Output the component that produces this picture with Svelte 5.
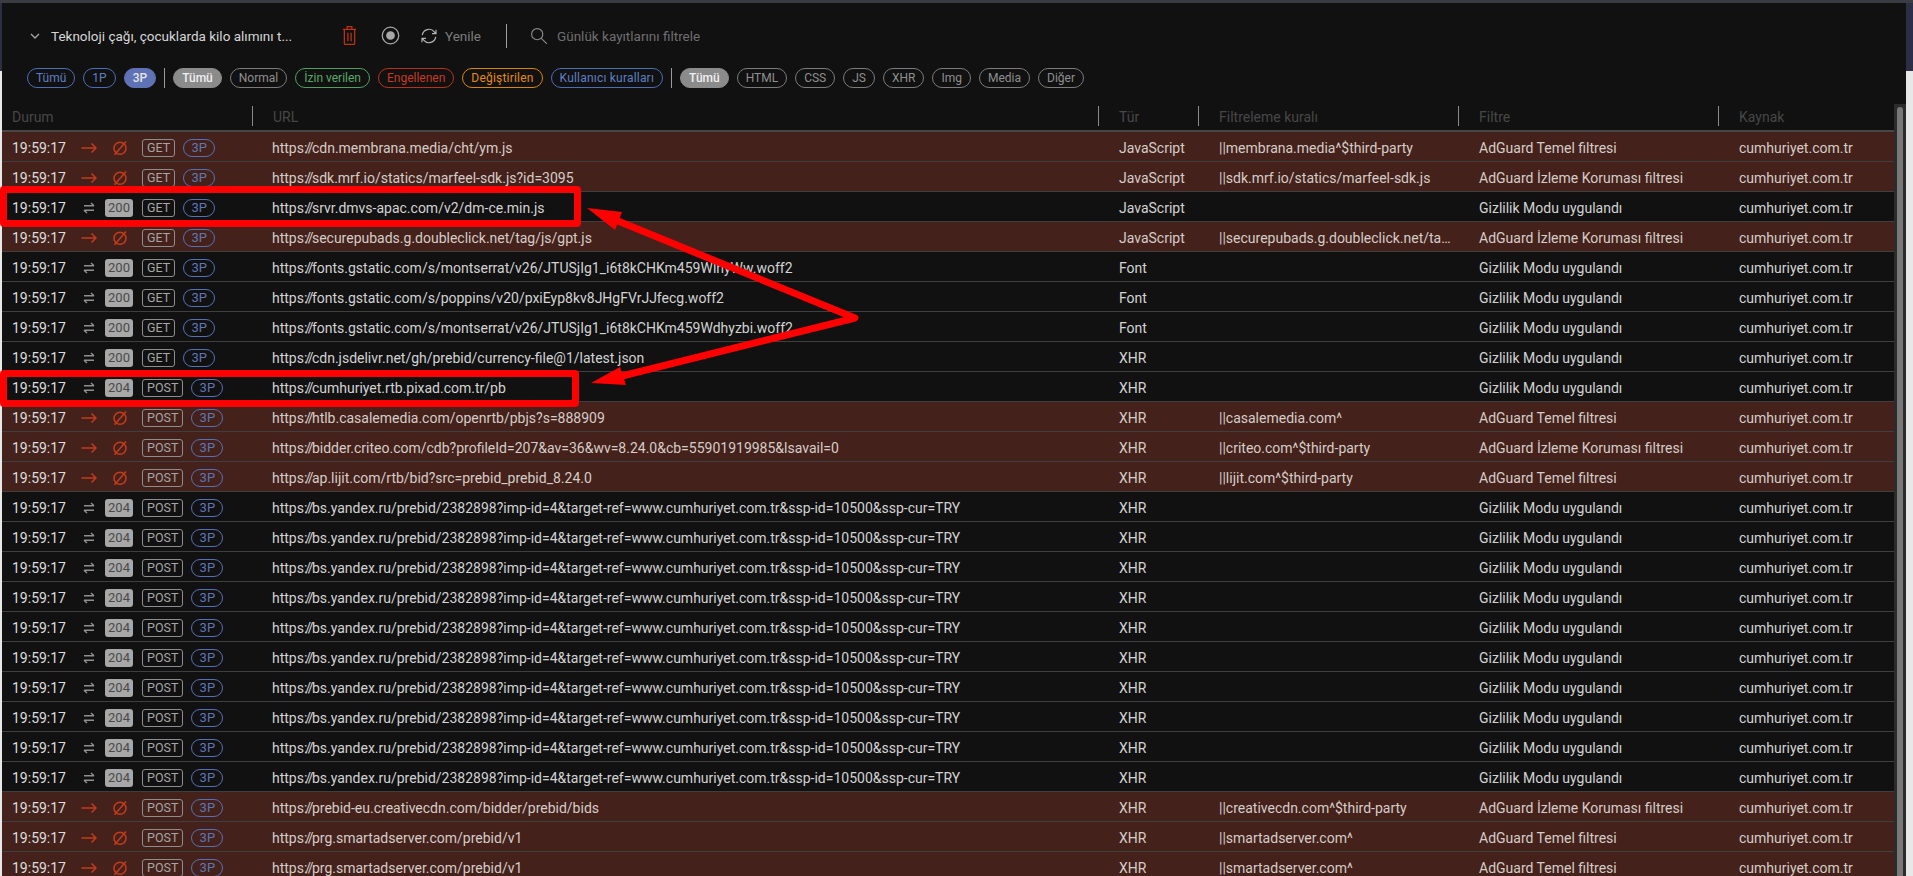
<script>
  const Y = 'https://bs.yandex.ru/prebid/2382898?imp-id=4&target-ref=www.cumhuriyet.com.tr&ssp-id=10500&ssp-cur=TRY';
  const P = 'Gizlilik Modu uygulandı';
  const T = 'AdGuard İzleme Koruması filtresi';
  const B = 'AdGuard Temel filtresi';
  const block = (m, url, type, rule, filter) => ({ blocked: true, m, url, type, rule, filter });
  const pass = (code, m, url, type) => ({ blocked: false, code, m, url, type, rule: '', filter: P });
  const rows = [
    block('GET', 'https://cdn.membrana.media/cht/ym.js', 'JavaScript', '||membrana.media^$third-party', B),
    block('GET', 'https://sdk.mrf.io/statics/marfeel-sdk.js?id=3095', 'JavaScript', '||sdk.mrf.io/statics/marfeel-sdk.js', T),
    pass(200, 'GET', 'https://srvr.dmvs-apac.com/v2/dm-ce.min.js', 'JavaScript'),
    block('GET', 'https://securepubads.g.doubleclick.net/tag/js/gpt.js', 'JavaScript', '||securepubads.g.doubleclick.net/tag/js/gpt.js', T),
    pass(200, 'GET', 'https://fonts.gstatic.com/s/montserrat/v26/JTUSjIg1_i6t8kCHKm459WlhyWw.woff2', 'Font'),
    pass(200, 'GET', 'https://fonts.gstatic.com/s/poppins/v20/pxiEyp8kv8JHgFVrJJfecg.woff2', 'Font'),
    pass(200, 'GET', 'https://fonts.gstatic.com/s/montserrat/v26/JTUSjIg1_i6t8kCHKm459Wdhyzbi.woff2', 'Font'),
    pass(200, 'GET', 'https://cdn.jsdelivr.net/gh/prebid/currency-file@1/latest.json', 'XHR'),
    pass(204, 'POST', 'https://cumhuriyet.rtb.pixad.com.tr/pb', 'XHR'),
    block('POST', 'https://htlb.casalemedia.com/openrtb/pbjs?s=888909', 'XHR', '||casalemedia.com^', B),
    block('POST', 'https://bidder.criteo.com/cdb?profileId=207&av=36&wv=8.24.0&cb=55901919985&lsavail=0', 'XHR', '||criteo.com^$third-party', T),
    block('POST', 'https://ap.lijit.com/rtb/bid?src=prebid_prebid_8.24.0', 'XHR', '||lijit.com^$third-party', B),
    ...Array.from({ length: 10 }, () => pass(204, 'POST', Y, 'XHR')),
    block('POST', 'https://prebid-eu.creativecdn.com/bidder/prebid/bids', 'XHR', '||creativecdn.com^$third-party', T),
    block('POST', 'https://prg.smartadserver.com/prebid/v1', 'XHR', '||smartadserver.com^', B),
    block('POST', 'https://prg.smartadserver.com/prebid/v1', 'XHR', '||smartadserver.com^', B),
  ];
  const party = [['Tümü', 'blue'], ['1P', 'blue'], ['3P', 'blue on']];
  const kinds = [['Tümü', 'grey on'], ['Normal', 'grey'], ['İzin verilen', 'green'], ['Engellenen', 'red'], ['Değiştirilen', 'orange'], ['Kullanıcı kuralları', 'blue wide']];
  const types = [['Tümü', 'grey on'], ['HTML', 'grey'], ['CSS', 'grey'], ['JS', 'grey'], ['XHR', 'grey'], ['Img', 'grey'], ['Media', 'grey'], ['Diğer', 'grey']];
  const cols = ['Durum', 'URL', 'Tür', 'Filtreleme kuralı', 'Filtre', 'Kaynak'];
</script>

<div class="page">
  <div class="stripe"></div>
  <div class="frame">
    <div class="panel">
      <div class="toolbar">
        <svg class="chev" viewBox="0 0 12 12" width="12" height="12"><path d="M2 4l4 4 4-4" /></svg>
        <span class="title">Teknoloji çağı, çocuklarda kilo alımını t...</span>
        <svg class="trash" viewBox="0 0 16 22" width="15" height="21"><path d="M1 4.5h14M5.5 4V1.5h5V4M2.5 4.5v15a1 1 0 0 0 1 1h9a1 1 0 0 0 1-1v-15M6.3 8v9M9.7 8v9" /></svg>
        <svg class="rec" viewBox="0 0 20 20" width="19" height="19"><circle cx="10" cy="10" r="8.7" /><circle class="dot" cx="10" cy="10" r="4.6" /></svg>
        <svg class="refresh" viewBox="0 0 20 20" width="18" height="18"><path d="M2.5 9a7.6 7.6 0 0 1 13.4-3.6l1.4 1.8M17.5 11a7.6 7.6 0 0 1-13.4 3.6l-1.4-1.8M17.8 3v4.4h-4.4M2.2 17v-4.4h4.4" /></svg>
        <span class="reload">Yenile</span>
        <span class="tsep"></span>
        <svg class="search" viewBox="0 0 20 20" width="18" height="18"><circle cx="8" cy="8" r="6.2" /><path d="M12.6 12.6l6.2 6.2" /></svg>
        <span class="ph">Günlük kayıtlarını filtrele</span>
      </div>
      <div class="chips">
        {#each party as [t, c]}<span class="chip {c}">{t}</span>{/each}
        <span class="csep"></span>
        {#each kinds as [t, c]}<span class="chip {c}">{t}</span>{/each}
        <span class="csep"></span>
        {#each types as [t, c]}<span class="chip {c}">{t}</span>{/each}
      </div>
      <div class="tablewrap">
        <div class="table">
          <div class="head grid">
            {#each cols as c}<div class="hcell">{c}</div>{/each}
          </div>
          {#each rows as r}
            <div class="row grid" class:blocked={r.blocked}>
              <div class="cell status">
                <span class="time">19:59:17</span>
                {#if r.blocked}
                  <svg class="ic arrow" viewBox="0 0 16 12" width="16" height="12"><path d="M0.5 6h14.5M10.5 1.5L15 6l-4.5 4.5" /></svg>
                  <svg class="ic ban" viewBox="0 0 16 16" width="16" height="16"><circle cx="8" cy="8.3" r="6" /><path d="M14 1.5L2.5 14.8" /></svg>
                {:else}
                  <svg class="ic swap" viewBox="0 0 12 12" width="12" height="12"><path d="M1 3.7h10M8 1l3 2.7M11 8.3H1M4 11L1 8.3" /></svg>
                  <span class="code">{r.code}</span>
                {/if}
                <span class="method">{r.m}</span>
                <span class="third">3P</span>
              </div>
              <div class="cell url">https<span class="colon">:</span><span class="slash">/</span><span class="slash2">/</span>{r.url.slice(8)}</div>
              <div class="cell">{r.type}</div>
              <div class="cell rule">{r.rule}</div>
              <div class="cell">{r.filter}</div>
              <div class="cell">cumhuriyet.com.tr</div>
            </div>
          {/each}
        </div>
        <div class="scroll"><div class="thumb"></div></div>
      </div>
    </div>
  </div>

  <div class="mark mark1"></div>
  <div class="mark mark2"></div>
  <svg class="arrows" width="1913" height="876" viewBox="0 0 1913 876">
    <path class="ln" d="M618 221L855 318L622 376" />
    <path class="hd" d="M587 208L622 212L615 230Z" />
    <path class="hd" d="M591 383L620 367L626 385Z" />
  </svg>
</div>

<style>
  :global(body) { margin: 0; background: #f1f1f1; }
  .page { position: relative; width: 1913px; height: 876px; overflow: hidden; font-family: Roboto, "Liberation Sans", sans-serif; }
  .stripe { height: 3px; background: #3b3b43; }
  .frame { padding: 0 7px 0 2px; height: 873px; background: linear-gradient(#2c2f44 68px, #e8e8e8 68px); }
  .panel { background: #111; height: 100%; display: flex; flex-direction: column; }
  .toolbar { display: flex; align-items: center; height: 31px; margin-top: 17px; padding-left: 27px; font-size: 13.5px; color: #d8d8d8; }
  .toolbar svg { fill: none; stroke-width: 1.3; flex: none; }
  .chev { stroke: #a5a5a5; }
  .title { margin-left: 10px; width: 243px; color: #d6d6d6; white-space: nowrap; }
  .trash { stroke: #bd3316; margin-left: 48px; }
  .rec { stroke: #a8a8a8; margin-left: 24px; }
  .rec .dot { fill: #a8a8a8; stroke: none; }
  .refresh { stroke: #b5b5b5; margin-left: 20px; }
  .reload { margin-left: 7px; color: #7d7d7d; }
  .tsep { width: 1px; height: 24px; background: #a0a0a0; margin-left: 25px; }
  .search { stroke: #8a8a8a; margin-left: 23px; }
  .ph { margin-left: 9px; color: #6f6f6f; }
  .chips { display: flex; align-items: center; gap: 8px; margin-top: 17px; padding-left: 25px; height: 20px; font-size: 12px; }
  .chip { box-sizing: border-box; height: 20px; line-height: 18px; padding: 0 8px; border-radius: 10px; border: 1px solid; white-space: nowrap; }
  .csep { width: 1px; height: 20px; background: #9a9a9a; }
  .blue { color: #5f7fc4; border-color: #4d6db8; }
  .blue.on { background: #5e72b5; border-color: #5e72b5; color: #e6e6e6; font-weight: 500; }
  .wide { letter-spacing: 0.2px; }
  .grey { color: #8f8f8f; border-color: #7b7b7b; }
  .grey.on { background: #8b8b8b; border-color: #8b8b8b; color: #f0f0f0; font-weight: 500; }
  .green { color: #56a968; border-color: #4f9f62; }
  .red { color: #c73a1f; border-color: #b9301a; }
  .orange { color: #e58a10; border-color: #d98508; letter-spacing: 0.2px; }
  .tablewrap { display: flex; flex: 1; min-height: 0; margin-top: 18px; }
  .table { flex: 1; min-width: 0; overflow: hidden; }
  .scroll { width: 12px; margin-top: -2px; background: #2b2b2b; flex: none; }
  .thumb { width: 6px; height: 800px; margin: 3px 3px 0; border-radius: 3px; background: #787878; }
  .grid { display: grid; grid-template-columns: 250px 846px 100px 260px 260px 176px; }
  .head { height: 24px; border-bottom: 2px solid #474747; box-sizing: content-box; }
  .hcell { height: 20px; line-height: 22px; padding-left: 20px; border-left: 1px solid #8a8a8a; color: #474747; font-size: 14px; }
  .hcell:first-child { border-left: 0; padding-left: 10px; }
  .row { height: 30px; box-sizing: border-box; border-bottom: 1px solid #3f3f3f; background: #111; color: #d3d3d3; font-size: 14px; }
  .row.blocked { background: #44221b; color: #d6ccc8; }
  .cell { box-sizing: border-box; padding-left: 21px; padding-top: 3px; height: 29px; line-height: 26px; white-space: nowrap; overflow: hidden; text-overflow: ellipsis; }
  .cell:first-child { padding-left: 10px; }
  .cell.url { padding-left: 20px; }
  .colon { letter-spacing: -2px; }
  .slash { letter-spacing: -3.5px; }
  .slash2 { letter-spacing: -1.5px; }
  .rule { padding-right: 5px; }
  .status { display: flex; align-items: center; overflow: visible; }
  .time { width: 55px; flex: none; color: #dedede; }
  .ic { fill: none; flex: none; stroke-width: 1.5; }
  .arrow { stroke: #c23c1c; margin-left: 14px; }
  .ban { stroke: #c23c1c; margin-left: 14.5px; margin-right: 14.5px; }
  .swap { stroke: #8f8f8f; margin-left: 16px; }
  .code { box-sizing: border-box; width: 28px; height: 18px; line-height: 18px; margin-left: 10px; margin-right: 9px; text-align: center; border-radius: 3px; background: #a8a8a8; color: #4a4a4a; font-size: 13px; }
  .method { box-sizing: border-box; height: 18px; line-height: 15px; padding: 0 4px; border: 1px solid #8d8d8d; border-radius: 3px; color: #a6a6a6; font-size: 12.5px; }
  .third { box-sizing: border-box; width: 32px; height: 18px; line-height: 16px; margin-left: 8px; text-align: center; border: 1px solid #5570b4; border-radius: 9px; color: #5e76b5; font-size: 13px; }
  .mark { position: absolute; left: 0; border: 7px solid #f00; border-radius: 4px; box-sizing: border-box; }
  .mark1 { top: 186px; width: 581px; height: 41px; }
  .mark2 { top: 370px; width: 579px; height: 37px; }
  .arrows { position: absolute; left: 0; top: 0; pointer-events: none; }
  .ln { fill: none; stroke: #f00; stroke-width: 7; stroke-linejoin: round; stroke-linecap: round; }
  .hd { fill: #f00; }
</style>
